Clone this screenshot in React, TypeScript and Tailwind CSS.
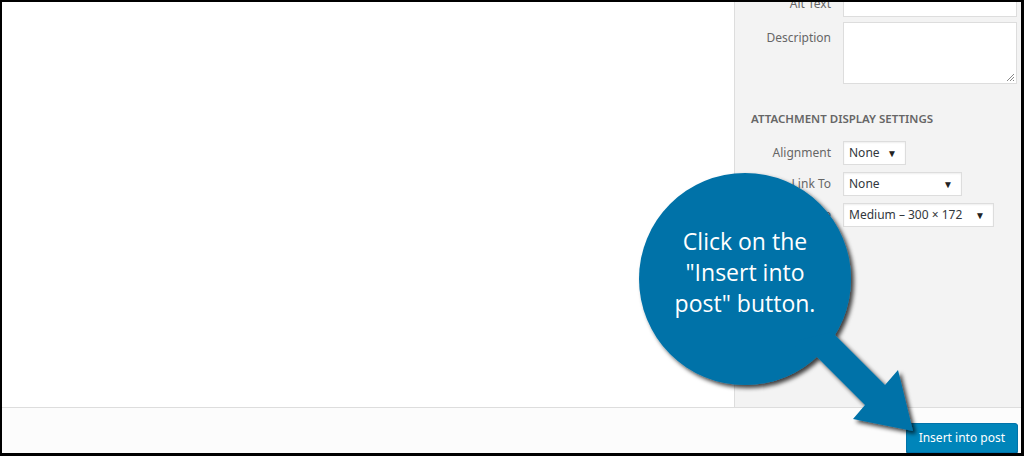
import React from "react";

function Select({ value, width }: { value: string; width: string }) {
  return (
    <div
      className={`${width} h-[24px] bg-white border border-[#ddd] shadow-[inset_0_1px_2px_rgba(0,0,0,0.07)] flex items-center justify-between pl-[5px] pr-[8px] text-[12px] text-[#32373c]`}
    >
      <span>{value}</span>
      <span className="text-[10px] text-[#222] leading-none">▼</span>
    </div>
  );
}

function Row({ label, children, className = "" }: { label: string; children: React.ReactNode; className?: string }) {
  return (
    <div className={`flex items-center ${className}`}>
      <label className="w-[108px] pr-[12px] text-right text-[12px] text-[#666]">{label}</label>
      {children}
    </div>
  );
}

function Callout() {
  return (
    <>
      <svg className="absolute left-0 top-0 pointer-events-none" width={1024} height={456} viewBox="0 0 1024 456">
        <defs>
          <filter id="shadow" x="-20%" y="-20%" width="140%" height="140%">
            <feDropShadow dx="3" dy="3" stdDeviation="2" floodColor="#000" floodOpacity="0.75" />
          </filter>
        </defs>
        <g fill="#0672a8" filter="url(#shadow)">
          <circle cx={745} cy={279} r={106} />
          <path d="M 770 382 Q 800 374 815 355 L 865 405 L 853 419 L 913 431 L 898 370 L 885 385 L 832 332 L 800 340 Z" />
        </g>
      </svg>
      <div
        className="absolute left-[645px] top-[226px] w-[200px] text-center text-white text-[23px] leading-[31px]"
        style={{ fontFamily: '"Open Sans", sans-serif' }}
      >
        Click on the
        <br />
        "Insert into
        <br />
        post" button.
      </div>
    </>
  );
}

export default function App() {
  return (
    <div
      className="relative w-[1024px] h-[456px] bg-black pt-[2px] pl-[2px] pr-[3px] pb-[3px] overflow-hidden"
      style={{ fontFamily: '"Noto Sans", "Open Sans", sans-serif' }}
    >
      <div className="w-full h-full flex flex-col overflow-hidden">
        <div className="flex flex-1 min-h-0">
          <div className="flex-1 bg-white" />
          <div className="w-[287px] bg-[#f3f3f3] border-l border-[#ddd] overflow-hidden">
            <div className="-mt-[11px] flex flex-col">
              <Row label="Alt Text">
                <div className="w-[174px] h-[26px] bg-white border border-[#ddd]" />
              </Row>
              <div className="flex items-start mt-[5px]">
                <label className="w-[108px] pr-[12px] text-right text-[12px] text-[#666] pt-[7px]">Description</label>
                <div className="relative w-[174px] h-[62px] bg-white border border-[#ddd]">
                  <svg className="absolute right-[1px] bottom-[1px]" width="9" height="9" viewBox="0 0 9 9">
                    <path d="M8 1 L1 8 M8 4 L4 8 M8 7 L7 8" stroke="#888" strokeWidth="1" />
                  </svg>
                </div>
              </div>
              <h2 className="mt-[26px] pl-[16px] text-[11.5px] font-semibold uppercase text-[#666] leading-[18px]">
                Attachment Display Settings
              </h2>
              <Row label="Alignment" className="mt-[13px]">
                <Select value="None" width="w-[63px]" />
              </Row>
              <Row label="Link To" className="mt-[7px]">
                <Select value="None" width="w-[119px]" />
              </Row>
              <Row label="Size" className="mt-[7px]">
                <Select value="Medium – 300 × 172" width="w-[151px]" />
              </Row>
            </div>
          </div>
        </div>
        <div className="h-[46px] shrink-0 bg-[#fcfcfc] border-t border-[#ddd] flex justify-end items-start pt-[15px] pr-[3px]">
          <button className="h-[30px] px-[12px] bg-[#0085ba] border border-[#0073aa] rounded-[3px] text-white text-[12px] shadow-[0_1px_0_#006799]">
            Insert into post
          </button>
        </div>
      </div>
      <Callout />
    </div>
  );
}
